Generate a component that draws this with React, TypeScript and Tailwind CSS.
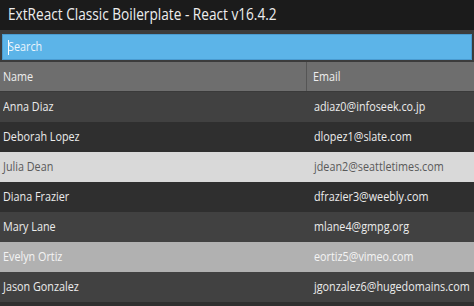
import React from 'react'

const people = [
  { name: 'Anna Diaz', email: 'adiaz0@infoseek.co.jp' },
  { name: 'Deborah Lopez', email: 'dlopez1@slate.com' },
  { name: 'Julia Dean', email: 'jdean2@seattletimes.com' },
  { name: 'Diana Frazier', email: 'dfrazier3@weebly.com' },
  { name: 'Mary Lane', email: 'mlane4@gmpg.org' },
  { name: 'Evelyn Ortiz', email: 'eortiz5@vimeo.com' },
  { name: 'Jason Gonzalez', email: 'jgonzalez6@hugedomains.com' },
]

function rowClass(i: number) {
  // hovered and selected rows in the grid
  if (i === 2) return 'bg-[#d9d9d9] text-[#5a5a5a]'
  if (i === 5) return 'bg-[#b1b1b1] text-[#f4f4f4]'
  return i % 2 === 0 ? 'bg-[#414141] text-[#ececec]' : 'bg-[#2f2f2f] text-[#ececec]'
}

// the screenshot's text runs narrower than Open Sans at its height
function Txt({ children }: { children: React.ReactNode }) {
  return <span className="inline-block whitespace-nowrap origin-left scale-x-[0.83]">{children}</span>
}

export default function App() {
  return (
    <div
      className="w-[474px] h-[306px] overflow-hidden bg-[#2f2f2f]"
      style={{ fontFamily: '"Open Sans", sans-serif' }}
    >
      <div className="h-[30px] bg-[#1b1b1b] flex items-center px-2 text-[15.5px] text-[#eeeeee]">
        <span className="inline-block whitespace-nowrap origin-left scale-x-[0.88]">
          ExtReact Classic Boilerplate - React v16.4.2
        </span>
      </div>
      <div className="bg-[#3c3c3c] pt-[4px] pb-[2px] pl-[2px] pr-[2px]">
        <div className="h-[26px] bg-[#5cb4e8] border border-[#4a9bd0] flex items-center px-[5px] text-[13px] text-[#eaf5fc]">
          <span className="w-px h-[15px] bg-white mr-[-1px]" />
          <Txt>Search</Txt>
        </div>
      </div>
      <div className="flex h-[30px] bg-[#6e6e6e] text-[13px] text-[#eeeeee] border-b border-[#3a3a3a]">
        <div className="w-[307px] shrink-0 flex items-center px-[3px] border-r border-[#555555]">
          <Txt>Name</Txt>
        </div>
        <div className="flex-1 flex items-center px-[6px]">
          <Txt>Email</Txt>
        </div>
      </div>
      {people.map((p, i) => (
        <div key={p.name} className={`flex h-[30px] text-[13px] ${rowClass(i)}`}>
          <div className="w-[307px] shrink-0 flex items-center px-[3px]">
            <Txt>{p.name}</Txt>
          </div>
          <div className="flex-1 flex items-center px-[7px]">
            <Txt>{p.email}</Txt>
          </div>
        </div>
      ))}
    </div>
  )
}
